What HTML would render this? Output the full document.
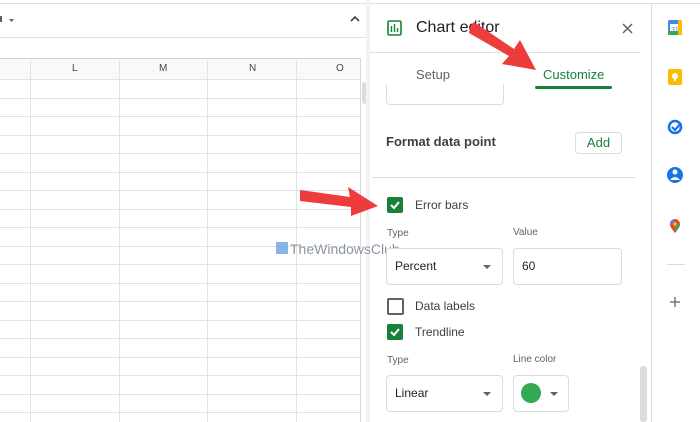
<!DOCTYPE html>
<html><head><meta charset="utf-8"><style>
body{margin:0;width:700px;height:422px;overflow:hidden;background:#fff;font-family:"Liberation Sans",Arial,sans-serif;position:relative}
.a{position:absolute}
.cb{position:absolute;width:16px;height:16px;border-radius:2px;background:#188038}
.cb svg{position:absolute;left:2px;top:2px}
.lbl{font-size:12px;color:#3c4043}
.box{position:absolute;border:1px solid #dadce0;border-radius:4px;background:#fff}
</style></head><body>
<svg class="a" style="left:0;top:0" width="700" height="422">
<line x1="0" y1="3.5" x2="700" y2="3.5" stroke="#e0e0e0"/>
<line x1="0" y1="37.5" x2="370" y2="37.5" stroke="#e0e0e0"/>
<rect x="0" y="58" width="360" height="21" fill="#f8f9fa"/>
<line x1="0" y1="58.5" x2="360" y2="58.5" stroke="#d0d0d0"/>
<g stroke="#e2e2e2">
<line x1="30.5" y1="58" x2="30.5" y2="422"/><line x1="119.5" y1="58" x2="119.5" y2="422"/>
<line x1="207.5" y1="58" x2="207.5" y2="422"/><line x1="296.5" y1="58" x2="296.5" y2="422"/>
<line x1="360.5" y1="58" x2="360.5" y2="422" stroke="#d8d8d8"/>
</g>
<g stroke="#e2e2e2" id="rows"></g>
<rect x="362" y="82" width="6" height="22" rx="3" fill="#dadce0"/>
<rect x="366" y="0" width="4" height="422" fill="#f3f3f3"/>
<line x1="651.5" y1="3" x2="651.5" y2="422" stroke="#dadce0"/>
<line x1="370" y1="52.5" x2="640" y2="52.5" stroke="#e0e0e0"/>
<line x1="372" y1="177.5" x2="636" y2="177.5" stroke="#e0e0e0"/>
<path d="M351 21 l4 -4 l4 4" stroke="#3c4043" stroke-width="1.6" fill="none"/>
<path d="M9 19 l5 0 l-2.5 3z" fill="#5f6368"/>
<rect x="0" y="16" width="2" height="6" fill="#5f6368"/>
<rect x="388" y="21" width="13" height="14" rx="1.5" fill="none" stroke="#188038" stroke-width="1.6"/>
<path d="M391.5 26v6M394.5 24v8M397.5 28v4" stroke="#188038" stroke-width="1.4"/>
<path d="M623 24l9 9M632 24l-9 9" stroke="#5f6368" stroke-width="1.5"/>
<rect x="535" y="86" width="77" height="3" rx="1.5" fill="#188038"/>
<rect x="668" y="20" width="14" height="15" rx="2" fill="#4285f4"/><rect x="670" y="24" width="10" height="9" fill="#fff"/><text x="671" y="32" font-size="7" fill="#4285f4" font-family="Liberation Sans">31</text><rect x="678" y="20" width="4" height="15" fill="#fbbc04"/><rect x="668" y="31" width="10" height="4" fill="#34a853"/>
<rect x="668" y="69" width="14" height="16" rx="2" fill="#fbbc04"/><circle cx="675" cy="76" r="3" fill="#fff"/><rect x="674" y="79" width="2" height="2" fill="#fff"/>
<circle cx="675" cy="127" r="6" fill="none" stroke="#1a73e8" stroke-width="2.6"/><path d="M672 127l3 3l6-7" stroke="#1a73e8" stroke-width="2.2" fill="none"/>
<circle cx="675" cy="175" r="8" fill="#1a73e8"/><circle cx="675" cy="172" r="2.5" fill="#fff"/><path d="M670 180q5-6 10 0" fill="#fff"/>
<path d="M675 233c-3-4-5-6-5-9a5 5 0 0 1 10 0c0 3-2 5-5 9z" fill="#ea4335"/><path d="M670 224a5 5 0 0 1 3-4.5l2 4z" fill="#4285f4"/><path d="M680 224c0 3-2 5-5 9l0-7z" fill="#34a853"/><circle cx="675" cy="224" r="1.8" fill="#fbbc04"/>
<line x1="667" y1="264.5" x2="685" y2="264.5" stroke="#dadce0"/>
<path d="M675 297v10M670 302h10" stroke="#5f6368" stroke-width="1.3"/>
<rect x="640" y="366" width="7" height="56" rx="3" fill="#dadce0"/>
<rect x="276" y="242" width="12" height="12" fill="#6aa2e0" opacity=".8"/>
<text x="290" y="254" font-size="14" fill="#8a94a0" font-family="Liberation Sans">TheWindowsClub</text>
</svg>
<div class="a" style="left:72px;top:63px;font-size:10px;color:#444">L</div>
<div class="a" style="left:159px;top:63px;font-size:10px;color:#444">M</div>
<div class="a" style="left:249px;top:63px;font-size:10px;color:#444">N</div>
<div class="a" style="left:336px;top:63px;font-size:10px;color:#444">O</div>
<div class="a" style="left:416px;top:19px;font-size:16px;color:#202124">Chart editor</div>
<div class="a" style="left:416px;top:67px;font-size:13px;color:#5f6368">Setup</div>
<div class="a" style="left:543px;top:67px;font-size:13px;color:#188038">Customize</div>
<div class="box" style="left:386px;top:84px;width:116px;height:20px;border-top:none;border-radius:0 0 4px 4px"></div>
<div class="a" style="left:386px;top:134px;font-size:13px;color:#3c4043;font-weight:bold">Format data point</div>
<div class="box" style="left:575px;top:132px;width:45px;height:20px"><div style="text-align:center;font-size:13px;color:#188038;line-height:20px">Add</div></div>
<div class="cb" style="left:387px;top:197px"><svg width="12" height="12"><path d="M2 6l3 3l5-6" stroke="#fff" stroke-width="2" fill="none"/></svg></div>
<div class="a lbl" style="left:415px;top:198px">Error bars</div>
<div class="a" style="left:387px;top:228px;font-size:10px;color:#5f6368">Type</div>
<div class="a" style="left:513px;top:227px;font-size:10px;color:#5f6368">Value</div>
<div class="box" style="left:386px;top:248px;width:115px;height:35px"><span style="position:absolute;left:8px;top:10px;font-size:12px;color:#202124">Percent</span><span style="position:absolute;left:96px;top:16px;border:4px solid transparent;border-top-color:#5f6368;border-bottom:0"></span></div>
<div class="box" style="left:513px;top:248px;width:107px;height:35px"><span style="position:absolute;left:8px;top:10px;font-size:12px;color:#202124">60</span></div>
<div class="a" style="left:387px;top:298px;width:13px;height:13px;border:2px solid #5f6368;border-radius:2px"></div>
<div class="a lbl" style="left:415px;top:299px">Data labels</div>
<div class="cb" style="left:387px;top:324px"><svg width="12" height="12"><path d="M2 6l3 3l5-6" stroke="#fff" stroke-width="2" fill="none"/></svg></div>
<div class="a lbl" style="left:415px;top:325px">Trendline</div>
<div class="a" style="left:387px;top:355px;font-size:10px;color:#5f6368">Type</div>
<div class="a" style="left:513px;top:354px;font-size:10px;color:#5f6368">Line color</div>
<div class="box" style="left:386px;top:375px;width:115px;height:35px"><span style="position:absolute;left:8px;top:10px;font-size:12px;color:#202124">Linear</span><span style="position:absolute;left:96px;top:16px;border:4px solid transparent;border-top-color:#5f6368;border-bottom:0"></span></div>
<div class="box" style="left:513px;top:375px;width:54px;height:35px"><span style="position:absolute;left:7px;top:7px;width:20px;height:20px;border-radius:50%;background:#34a853"></span><span style="position:absolute;left:36px;top:16px;border:4px solid transparent;border-top-color:#5f6368;border-bottom:0"></span></div>
<svg class="a" style="left:0;top:0" width="700" height="422">
<g fill="#ee3b3b">
<path d="M470 27 L474 22 L514 49 L520 40 L536 70 L502 64 L509 56 L469 33 Z"/>
<path d="M300 190 L350 197 L348 187 L378 206 L351 216 L351 207 L300 201 Z"/>
</g>
</svg>
<script>
var g=document.getElementById('rows'),s='';
for(var y=79;y<422;y+=18.5){s+='<line x1="0" y1="'+(Math.round(y)+.5)+'" x2="360" y2="'+(Math.round(y)+.5)+'"/>';}
g.innerHTML=s;
</script>
</body></html>
